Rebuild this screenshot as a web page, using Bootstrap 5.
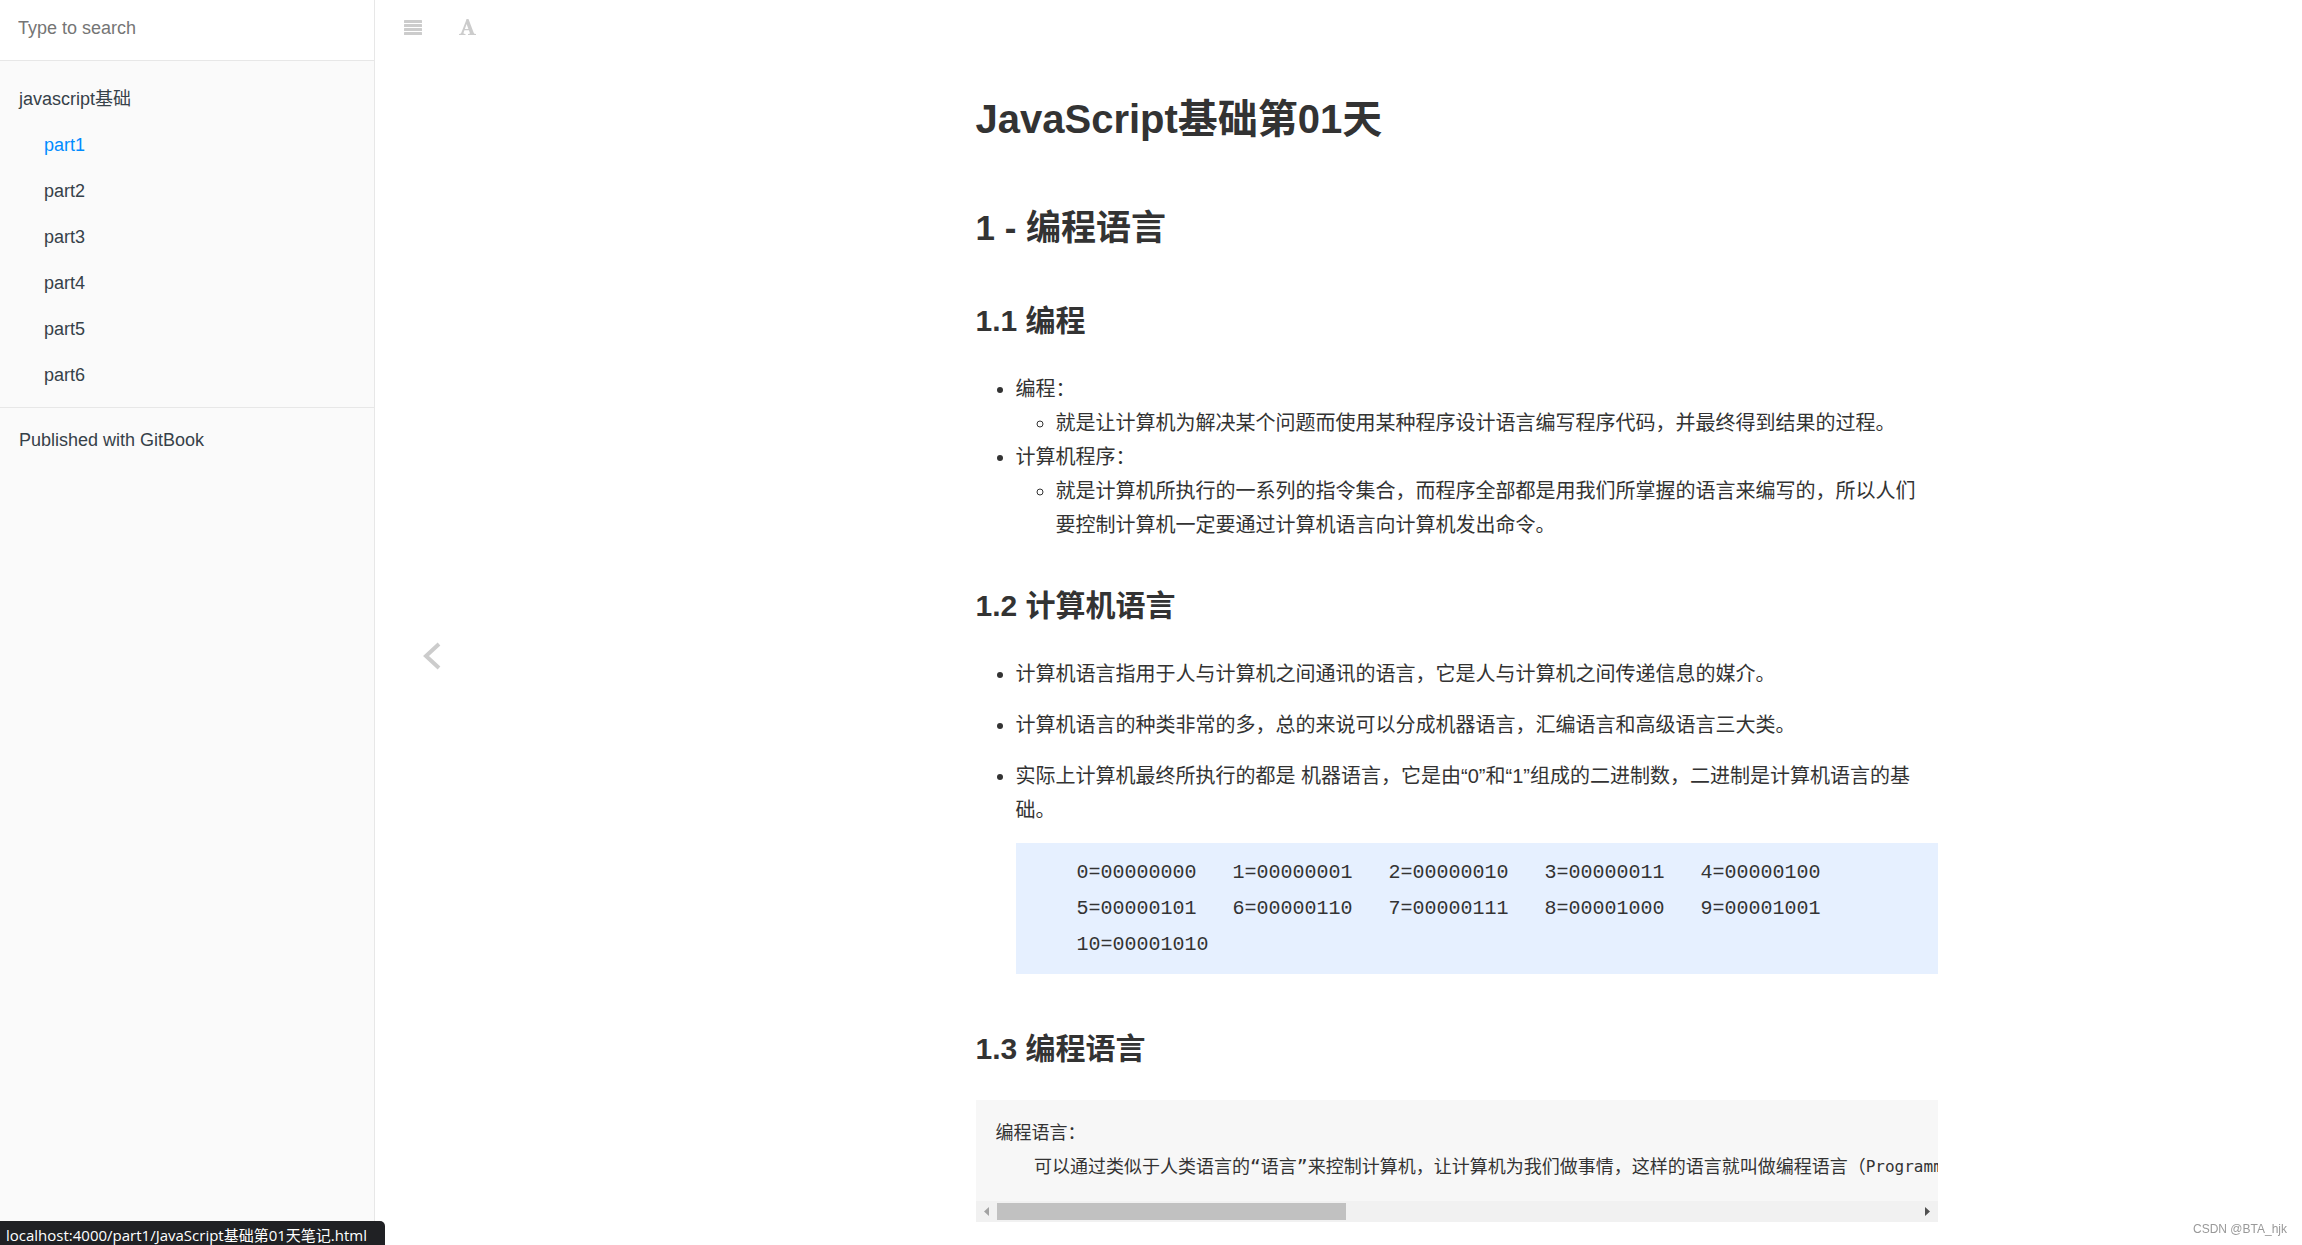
<!DOCTYPE html>
<html lang="zh-CN">
<head>
<meta charset="utf-8">
<meta name="viewport" content="width=device-width, initial-scale=1">
<title>part1 · JavaScript基础</title>
<link href="https://cdn.jsdelivr.net/npm/bootstrap@5.3.0/dist/css/bootstrap.min.css" rel="stylesheet">
<style>
body { font-family: "Liberation Sans", "Noto Sans CJK SC", sans-serif; color: #333; background: #fff; }
.sidebar { width: 375px; background: #fafafa; border-right: 1px solid #e7e7e7; font-size: 18px; line-height: 22px; }
.search-box { background: #fff; border-bottom: 1px solid #e7e7e7; height: 61px; }
.search-box input { font-size: 18px; line-height: 22px; padding: 17px 18px 21px; }
.search-box input::placeholder { color: #757575; opacity: 1; }
.summary { padding: 15px 0 9px; border-bottom: 1px solid #e7e7e7; }
.summary a, .made-with { display: block; padding: 12px 19px; color: #364149; text-decoration: none; }
.summary ul a { padding-left: 44px; }
.summary a.current { color: #008cff; }
.made-with { padding: 21px 19px; }
.toolbar-icons { height: 62px; padding: 0 10px; }
.toolbar-icons button, .page-turn { border: 0; background: none; color: #ccc; padding: 0; }
.toolbar-icons button { width: 55px; height: 54px; }
.book-content { max-width: 1238px; padding: 0 20px 0 256px; }
h1, h2, h3 { font-weight: 700; color: #333; margin: 0; }
h1 { font-size: 40px; line-height: 68px; padding: 23px 0 33px; }
h2 { font-size: 35px; line-height: 60px; padding: 12px 0 32px; }
h3 { font-size: 30px; line-height: 50px; padding: 6px 0 26px; }
.text-list { font-size: 20px; line-height: 34px; padding-left: 40px; margin: 0 0 33px; }
.text-list ul { padding-left: 40px; }
.loose > li { margin-bottom: 17px; }
.bits { background: #e6f0ff; font: 20px/36px "Liberation Mono", monospace; color: #333; padding: 12px 0 11px 61px; margin: 16px 0 44px; }
.code-box { background: #f7f7f7; }
.code-box pre { font: 16px/34px "DejaVu Sans Mono", "Noto Sans CJK SC", monospace; color: #333; padding: 16px 0 17px 20px; margin: 0; overflow: hidden; }
.code-box .zh { font-size: 18px; vertical-align: top; }
.h-scroll { height: 21px; background: #f1f1f1; }
.h-scroll svg { width: 21px; height: 21px; flex: none; }
.h-thumb { width: 38%; height: 17px; background: #c1c1c1; }
.page-turn { position: fixed; left: 422px; top: 640px; line-height: 0; }
.status-tip { position: fixed; left: 0; bottom: 0; background: #202124; color: #fff; font: 15px/20px "Open Sans", "Noto Sans CJK SC", sans-serif; padding: 4px 18px 0 6px; border-top-right-radius: 5px; }
.author-mark { position: fixed; right: 15px; bottom: 8px; color: #999; font-size: 12px; line-height: 16px; }
</style>
<script src="https://cdn.jsdelivr.net/npm/bootstrap@5.3.0/dist/js/bootstrap.bundle.min.js"></script>
</head>
<body>
<div class="d-flex vh-100 overflow-hidden">
  <aside class="sidebar flex-shrink-0">
    <div class="search-box"><input class="w-100 border-0 bg-transparent" type="text" placeholder="Type to search" aria-label="Type to search"></div>
    <nav class="summary">
      <a href="#">javascript基础</a>
      <ul class="list-unstyled m-0">
        <li><a class="current" href="#">part1</a></li>
        <li><a href="#">part2</a></li>
        <li><a href="#">part3</a></li>
        <li><a href="#">part4</a></li>
        <li><a href="#">part5</a></li>
        <li><a href="#">part6</a></li>
      </ul>
    </nav>
    <a class="made-with" href="#">Published with GitBook</a>
  </aside>
  <main class="flex-grow-1 overflow-hidden">
    <div class="toolbar-icons d-flex">
      <button type="button" aria-label="Toggle sidebar" class="lh-1"><svg width="18" height="15" viewBox="0 0 18 15" fill="currentColor"><rect width="18" height="3" rx="0.5"/><rect y="4" width="18" height="3" rx="0.5"/><rect y="8" width="18" height="3" rx="0.5"/><rect y="12" width="18" height="3" rx="0.5"/></svg></button>
      <button type="button" aria-label="Font settings" class="lh-1"><svg width="17" height="17" viewBox="0 0 17 17" fill="currentColor" fill-rule="evenodd"><path d="M7.500 0h2l5.200 13.700.6 1 1.700.4V16H9v-.9l1.800-.4-.1-1.200-.8-2.200H5.400l-.8 2.300.1 1.100 1.800.4V16H0v-.9l1.500-.4.8-1L6.900 2zM7.600 5 5.900 10h3.500z"/></svg></button>
    </div>
    <article class="book-content mx-auto">
      <h1>JavaScript基础第01天</h1>
      <h2>1 - 编程语言</h2>
      <h3>1.1 编程</h3>
      <ul class="text-list">
        <li>编程：
          <ul><li>就是让计算机为解决某个问题而使用某种程序设计语言编写程序代码，并最终得到结果的过程。</li></ul>
        </li>
        <li>计算机程序：
          <ul><li>就是计算机所执行的一系列的指令集合，而程序全部都是用我们所掌握的语言来编写的，所以人们<br>要控制计算机一定要通过计算机语言向计算机发出命令。</li></ul>
        </li>
      </ul>
      <h3>1.2 计算机语言</h3>
      <ul class="text-list loose">
        <li>计算机语言指用于人与计算机之间通讯的语言，它是人与计算机之间传递信息的媒介。</li>
        <li>计算机语言的种类非常的多，总的来说可以分成机器语言，汇编语言和高级语言三大类。</li>
        <li>实际上计算机最终所执行的都是 机器语言，它是由“0”和“1”组成的二进制数，二进制是计算机语言的基础。
<pre class="bits">0=00000000   1=00000001   2=00000010   3=00000011   4=00000100
5=00000101   6=00000110   7=00000111   8=00001000   9=00001001
10=00001010</pre></li>
      </ul>
      <h3>1.3 编程语言</h3>
      <div class="code-box">
<pre><span class="zh">编程语言：</span>
    <span class="zh">可以通过类似于人类语言的“语言”来控制计算机，让计算机为我们做事情，这样的语言就叫做编程语言（</span>Programming Language<span class="zh">）。</span></pre>
        <div class="h-scroll d-flex align-items-center">
          <svg viewBox="0 0 21 21"><path d="M13 6v9l-5-4.500z" fill="#a3a3a3"/></svg>
          <div class="flex-grow-1"><div class="h-thumb"></div></div>
          <svg viewBox="0 0 21 21"><path d="M8 6v9l5-4.500z" fill="#505050"/></svg>
        </div>
      </div>
    </article>
  </main>
</div>
<button class="page-turn" type="button" aria-label="Previous page"><svg width="20" height="32" viewBox="0 0 20 32" fill="none" stroke="#ccc" stroke-width="4"><path d="M17 4 4 16l13 12"/></svg></button>
<div class="status-tip">localhost:4000/part1/JavaScript基础第01天笔记.html</div>
<div class="author-mark">CSDN @BTA_hjk</div>
</body>
</html>
